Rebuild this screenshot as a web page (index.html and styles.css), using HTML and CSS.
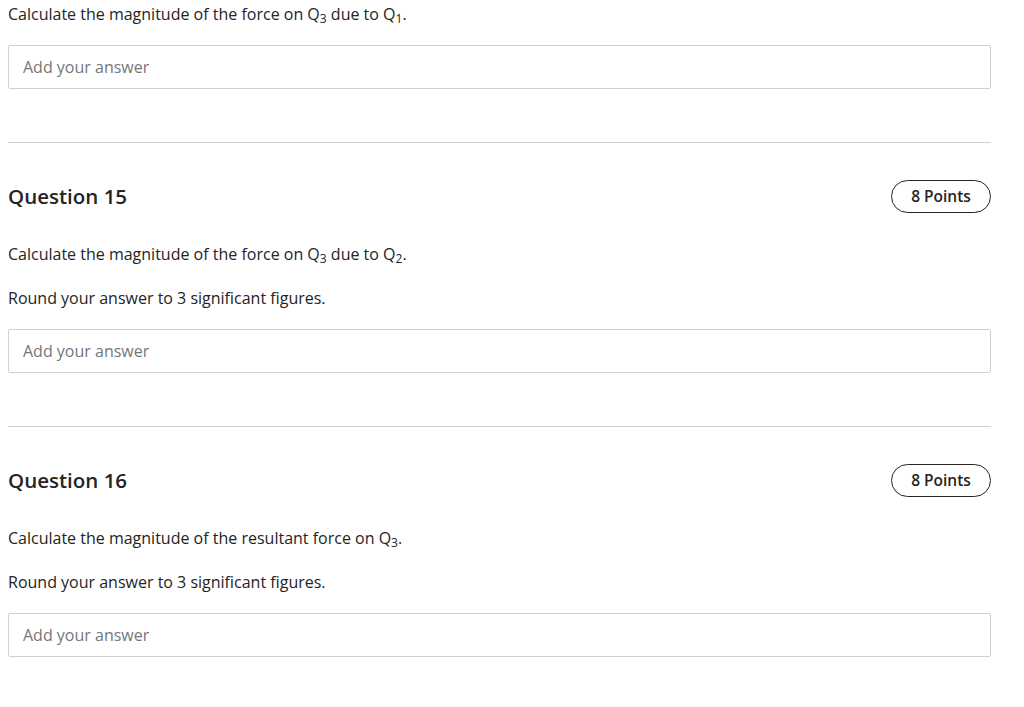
FILE: index.html
```html
<!DOCTYPE html>
<html>
<head>
<meta charset="utf-8">
<link rel="stylesheet" href="styles.css">
</head>
<body>
<main class="form">
  <section class="question first">
    <p class="text">Calculate the magnitude of the force on Q<sub>3</sub> due to Q<sub>1</sub>.</p>
    <div class="answer">Add your answer</div>
  </section>
  <hr class="sep">
  <section class="question">
    <div class="qhead">
      <h2 class="qtitle">Question 15</h2>
      <span class="points">8 Points</span>
    </div>
    <p class="text">Calculate the magnitude of the force on Q<sub>3</sub> due to Q<sub>2</sub>.</p>
    <p class="text">Round your answer to 3 significant figures.</p>
    <div class="answer">Add your answer</div>
  </section>
  <hr class="sep">
  <section class="question">
    <div class="qhead">
      <h2 class="qtitle">Question 16</h2>
      <span class="points">8 Points</span>
    </div>
    <p class="text">Calculate the magnitude of the resultant force on Q<sub>3</sub>.</p>
    <p class="text">Round your answer to 3 significant figures.</p>
    <div class="answer">Add your answer</div>
  </section>
</main>
</body>
</html>
```

FILE: styles.css
```css
* { box-sizing: border-box; }
html, body { margin: 0; padding: 0; background: #fff; }
body {
  font-family: "Open Sans", "Liberation Sans", sans-serif;
  color: #252423;
  font-size: 16px;
}
.form {
  width: 983px;
  margin-left: 8px;
  padding-top: 3px;
}
.question {
  display: flex;
  flex-direction: column;
}
.qhead {
  display: flex;
  align-items: center;
  justify-content: space-between;
  height: 34px;
  margin-top: 36px;
  margin-bottom: 30px;
}
.qtitle {
  margin: 0;
  font-size: 20.5px;
  font-weight: 600;
  line-height: 28px;
  color: #252423;
}
.points {
  display: inline-flex;
  align-items: center;
  justify-content: center;
  width: 100px;
  height: 33px;
  border: 1px solid #252423;
  border-radius: 17px;
  font-size: 15.5px;
  font-weight: 600;
  color: #252423;
}
.text {
  margin: 0 0 22px 0;
  line-height: 22px;
}
.text sub {
  font-size: 12px;
  line-height: 0;
  vertical-align: -3px;
}
.answer {
  margin-top: -2px;
  height: 44px;
  border: 1px solid #d2d0ce;
  border-radius: 2px;
  padding-left: 14px;
  display: flex;
  align-items: center;
  color: #767676;
  font-size: 16px;
}
.sep {
  margin: 53px 0 0 0;
  border: 0;
  height: 1px;
  background: #d2d0ce;
}
```
